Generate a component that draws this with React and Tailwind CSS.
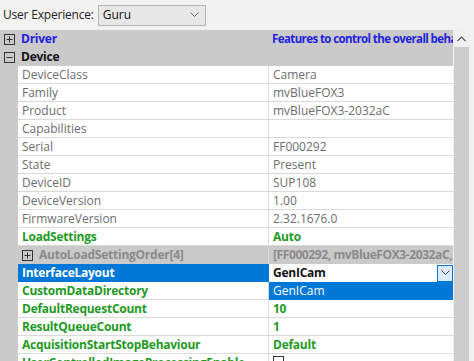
import React from "react";

function PlusBox({ minus }) {
  return (
    <svg width="11" height="11" viewBox="0 0 11 11" className="block">
      <rect x="0.5" y="0.5" width="10" height="10" fill="none" stroke="#333" />
      <line x1="2.5" y1="5.5" x2="8.5" y2="5.5" stroke="#333" />
      {!minus && <line x1="5.5" y1="2.5" x2="5.5" y2="8.5" stroke="#333" />}
    </svg>
  );
}

function Row({ name, value, green, children }) {
  return (
    <div className="flex h-[18px]">
      <div className="w-[18px] shrink-0 bg-[#cacaca]" />
      <div
        className={
          "w-[251px] shrink-0 bg-white border-b border-r border-[#dadada] pl-[4px] leading-[18px] whitespace-nowrap overflow-hidden " +
          (green ? "font-bold tracking-[-0.25px] text-[#1f9a1f]" : "text-[#6d6d6d]")
        }
      >
        {name}
      </div>
      <div
        className={
          "w-[184px] shrink-0 bg-white border-b border-[#dadada] pl-[4px] leading-[18px] whitespace-nowrap overflow-hidden " +
          (green ? "font-bold tracking-[-0.25px] text-[#1f9a1f]" : "text-[#6d6d6d]")
        }
      >
        {children ?? value}
      </div>
    </div>
  );
}

export default function App() {
  const grey = [
    ["DeviceClass", "Camera"],
    ["Family", "mvBlueFOX3"],
    ["Product", "mvBlueFOX3-2032aC"],
    ["Capabilities", ""],
    ["Serial", "FF000292"],
    ["State", "Present"],
    ["DeviceID", "SUP108"],
    ["DeviceVersion", "1.00"],
    ["FirmwareVersion", "2.32.1676.0"],
  ];
  return (
    <div
      className="w-[474px] h-[361px] overflow-hidden bg-[#f2f2f2] text-[12px] flex flex-col"
      style={{ fontFamily: "'Open Sans', 'Noto Sans', sans-serif" }}
    >
      <div className="h-[30px] shrink-0 flex items-center pl-[3px] gap-[4px]">
        <span className="text-[#222] tracking-[-0.2px]">User Experience:</span>
        <div className="w-[108px] h-[21px] border border-[#b4b4b4] bg-[#e7e7e7] flex items-center justify-between pl-[4px] pr-[6px]">
          <span className="text-[#111]">Guru</span>
          <svg width="9" height="6" viewBox="0 0 9 6">
            <path d="M0.5 0.5 L4.5 4.5 L8.5 0.5" fill="none" stroke="#666" />
          </svg>
        </div>
      </div>
      <div className="flex flex-1 min-h-0">
        <div className="w-[453px] shrink-0 flex flex-col overflow-hidden">
          <div className="flex h-[18px] bg-[#cacaca] items-center">
            <div className="w-[18px] shrink-0 pl-[4px]">
              <PlusBox />
            </div>
            <div className="w-[251px] shrink-0 font-bold tracking-[-0.25px] text-[#2222dd] pl-[3px]">Driver</div>
            <div className="w-[184px] shrink-0 font-bold text-[11.5px] tracking-[-0.6px] text-[#2222dd] pl-[3px] whitespace-nowrap overflow-hidden">
              Features to control the overall behaviour
            </div>
          </div>
          <div className="flex h-[18px] bg-[#cacaca] items-center">
            <div className="w-[18px] shrink-0 pl-[4px]">
              <PlusBox minus />
            </div>
            <div className="font-bold tracking-[-0.25px] text-[#111] pl-[3px]">Device</div>
          </div>
          {grey.map(([n, v]) => (
            <Row key={n} name={n} value={v} />
          ))}
          <Row name="LoadSettings" value="Auto" green />
          <div className="flex h-[18px] bg-[#cacaca]">
            <div className="w-[18px] shrink-0" />
            <div className="w-[251px] shrink-0 flex items-center pl-[4px] gap-[6px] font-bold tracking-[-0.25px] text-[#8a8a8a] border-r border-[#dadada]">
              <PlusBox />
              <span>AutoLoadSettingOrder[4]</span>
            </div>
            <div className="w-[184px] shrink-0 pl-[4px] leading-[18px] font-bold tracking-[-0.4px] text-[#8a8a8a] whitespace-nowrap overflow-hidden">
              [FF000292, mvBlueFOX3-2032aC, mvBlueFOX3]
            </div>
          </div>
          <div className="flex h-[18px]">
            <div className="w-[18px] shrink-0 bg-[#cacaca]" />
            <div className="w-[251px] shrink-0 bg-[#0078d7] text-white font-bold tracking-[-0.25px] pl-[4px] leading-[18px]">
              InterfaceLayout
            </div>
            <div className="w-[184px] shrink-0 bg-white flex items-center justify-between">
              <span className="pl-[4px] font-bold tracking-[-0.25px] text-[#111]">GenICam</span>
              <div className="w-[16px] h-[17px] border border-[#0078d7] bg-[#dcecfc] flex items-center justify-center">
                <svg width="9" height="6" viewBox="0 0 9 6">
                  <path d="M0.5 0.5 L4.5 4.5 L8.5 0.5" fill="none" stroke="#444" />
                </svg>
              </div>
            </div>
          </div>
          <div className="flex h-[18px]">
            <div className="w-[18px] shrink-0 bg-[#cacaca]" />
            <div className="w-[251px] shrink-0 bg-white border-b border-r border-[#dadada] pl-[4px] leading-[18px] font-bold tracking-[-0.25px] text-[#1f9a1f]">
              CustomDataDirectory
            </div>
            <div className="w-[184px] shrink-0 bg-[#0078d7] text-white pl-[4px] leading-[18px]">GenICam</div>
          </div>
          <Row name="DefaultRequestCount" value="10" green />
          <Row name="ResultQueueCount" value="1" green />
          <Row name="AcquisitionStartStopBehaviour" value="Default" green />
          <Row name="UserControlledImageProcessingEnable" green>
            <div className="pt-[2px]">
              <div className="w-[11px] h-[11px] border border-[#333] bg-white" />
            </div>
          </Row>
        </div>
        <div className="flex-1 flex flex-col">
          <div className="w-[17px] flex flex-col flex-1 bg-[#f0f0f0]">
            <div className="h-[17px] flex items-center justify-center">
              <svg width="9" height="6" viewBox="0 0 9 6">
                <path d="M0.5 5 L4.5 1 L8.5 5" fill="none" stroke="#555" strokeWidth="1.2" />
              </svg>
            </div>
            <div className="flex-1 mx-[1px] bg-[#cdcdcd]" />
          </div>
        </div>
      </div>
    </div>
  );
}
